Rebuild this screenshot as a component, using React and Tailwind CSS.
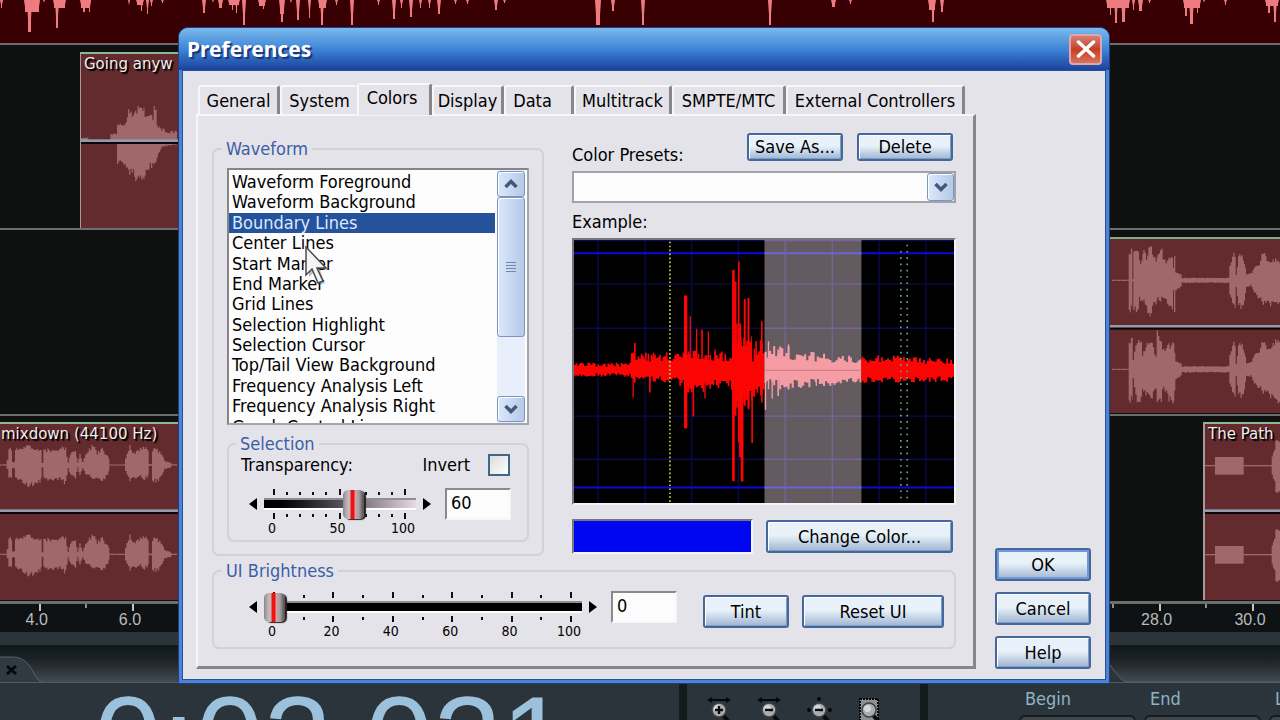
import React, { useState } from "react";

const rand = (i) => {
  const v = Math.abs(Math.sin(i * 12.9898 + 4.1) * 43758.5453);
  return v - Math.floor(v);
};

// Builds a jagged outline from [x, up, down] control points around a middle line.
function outline(points, mid, step = 4, rough = 0.25) {
  const top = [];
  const bottom = [];
  for (let k = 0; k < points.length - 1; k++) {
    const [x0, u0, d0] = points[k];
    const [x1, u1, d1] = points[k + 1];
    const n = Math.max(1, Math.round((x1 - x0) / step));
    for (let j = 0; j < n; j++) {
      const t = j / n;
      const x = x0 + (x1 - x0) * t;
      const xe = x0 + (x1 - x0) * ((j + 1) / n);
      const u = (u0 + (u1 - u0) * t) * (1 - rough * rand(x));
      const d = (d0 + (d1 - d0) * t) * (1 - rough * rand(x + 77));
      top.push(`${x},${mid - u}`, `${xe},${mid - u}`);
      bottom.push(`${x},${mid + d}`, `${xe},${mid + d}`);
    }
  }
  return [...top, ...bottom.reverse()].join(" ");
}

const MASTER_SPIKES = [
  [0, 3, 8], [24, 16, 12], [27, 5, 32], [43, 2, 4], [53, 13, 8], [55, 4, 28], [80, 11, 8], [82, 4, 12], [88, 3, 12],
  [128, 2, 9], [136, 8, 5], [140, 3, 11], [146, 3, 14], [150, 3, 6], [161, 3, 3], [202, 4, 13], [212, 2, 4], [218, 5, 8],
  [228, 12, 5], [231, 3, 10], [235, 3, 13], [242, 4, 25], [258, 8, 6], [262, 3, 9], [279, 6, 14], [280, 4, 22], [290, 2, 5],
  [296, 4, 20], [308, 3, 18], [318, 9, 8], [320, 4, 25], [335, 3, 5], [350, 4, 25], [377, 3, 5], [392, 4, 19], [400, 3, 8],
  [409, 4, 17], [419, 3, 8], [428, 3, 8], [437, 4, 14], [454, 3, 4], [466, 3, 4], [494, 4, 10], [503, 3, 3], [595, 6, 25],
  [611, 4, 11], [641, 4, 25], [768, 4, 25], [831, 5, 7], [849, 3, 4], [928, 8, 10], [931, 4, 22], [940, 4, 12],
  [1106, 24, 8], [1109, 3, 15], [1114, 4, 23], [1121, 5, 22], [1132, 3, 10], [1138, 5, 11], [1148, 3, 3], [1183, 18, 8],
  [1184, 4, 16], [1189, 5, 24], [1196, 3, 13], [1203, 2, 4], [1224, 3, 5], [1265, 14, 6], [1267, 4, 13], [1273, 4, 22],
];

const MIXDOWN = [
  [0, 2, 2], [18, 2, 2], [20, 15, 15], [25, 62, 45], [33, 55, 48], [36, 10, 10], [42, 10, 10], [45, 48, 45], [60, 62, 45],
  [70, 55, 60], [85, 62, 68], [100, 50, 65], [122, 55, 50], [125, 8, 8], [130, 50, 48], [150, 50, 52], [175, 50, 45],
  [185, 60, 52], [195, 54, 62], [203, 8, 10], [210, 40, 34], [225, 50, 44], [232, 8, 8], [238, 34, 38], [246, 12, 12],
  [255, 40, 28], [278, 64, 44], [290, 40, 44], [305, 52, 56], [325, 24, 24], [328, 2, 2], [370, 2, 2], [375, 22, 22],
  [388, 62, 52], [400, 40, 44], [415, 50, 36], [432, 64, 46], [443, 44, 38], [446, 3, 3], [455, 3, 3], [456, 50, 52],
  [470, 50, 54], [485, 38, 34], [492, 14, 14], [510, 8, 8], [514, 2, 2], [531, 2, 2],
];

const SPEECH_A = [
  [36, 2, 2], [85, 2, 2], [86, 97, 97], [96, 97, 97], [97, 4, 4], [100, 97, 98], [115, 95, 98], [117, 65, 65], [124, 65, 70],
  [130, 98, 75], [138, 80, 95], [145, 115, 130], [152, 110, 130], [156, 85, 90], [170, 70, 70], [172, 102, 65], [184, 95, 65],
  [188, 65, 60], [205, 70, 80], [215, 85, 100], [219, 40, 30], [222, 98, 108], [226, 30, 35], [240, 22, 22], [245, 8, 8],
  [385, 8, 8], [388, 45, 45], [396, 90, 85], [404, 90, 92], [407, 20, 20], [414, 85, 85], [425, 85, 88], [432, 65, 62],
  [438, 20, 20], [450, 22, 18], [465, 44, 44], [480, 64, 64], [488, 96, 84], [496, 74, 68], [510, 70, 80], [540, 70, 75],
];

const SPEECH_B = [
  [36, 2, 2], [85, 2, 2], [86, 97, 102], [96, 97, 102], [98, 30, 30], [106, 95, 98], [122, 102, 104], [126, 45, 70],
  [140, 82, 88], [155, 80, 98], [166, 45, 60], [170, 120, 120], [182, 100, 110], [186, 60, 60], [205, 80, 100], [220, 88, 104],
  [226, 30, 35], [240, 22, 22], [245, 10, 10], [385, 10, 10], [388, 45, 45], [396, 90, 85], [404, 90, 92], [407, 20, 20],
  [414, 85, 85], [425, 85, 88], [432, 65, 62], [438, 20, 20], [450, 22, 24], [465, 50, 50], [480, 70, 64], [488, 96, 84],
  [496, 74, 68], [510, 80, 90], [525, 95, 104], [540, 112, 115],
];

const GOING = [
  [242, 14, 2], [265, 14, 2], [266, 4, 2], [330, 4, 2], [332, 24, 2], [348, 26, 2], [352, 60, 68], [375, 60, 80], [385, 100, 100],
  [400, 88, 100], [410, 105, 130], [428, 118, 138], [438, 85, 90], [458, 80, 80], [462, 128, 90], [469, 120, 70], [471, 56, 50],
  [485, 42, 18], [500, 34, 14], [532, 32, 8],
];

function MasterWave() {
  return (
    <svg className="block h-full w-full" viewBox="0 0 1280 43" preserveAspectRatio="none" aria-hidden="true">
      {MASTER_SPIKES.map(([x, w, h], i) => (
        <polygon key={i} fill="#ee7b80" points={`${x},0 ${x + w},0 ${x + w - 1},${h * 0.6} ${x + w - 1},${h} ${x + 1},${h} ${x + 1},${h * 0.6}`} />
      ))}
    </svg>
  );
}

function Divider({ x, width, y }) {
  return (
    <>
      <rect x={x} y={y} width={width} height="8" fill="#939aab" />
      <rect x={x} y={y + 8} width={width} height="6" fill="#0c0608" />
    </>
  );
}

function ClipTitle({ children }) {
  return (
    <span className="absolute top-0 left-0 pl-[3px] whitespace-pre font-['DejaVu_Sans','Liberation_Sans',sans-serif] text-[15px] leading-5 text-[#f2ecec] [text-shadow:1px_1px_0_#000,2px_2px_1px_#000]">
      {children}
    </span>
  );
}

function Tracks() {
  return (
    <div className="shrink-0">
      <div className="h-[43px] bg-[#380003]">
        <MasterWave />
      </div>
      <div className="h-[187px] border-y-2 border-[#6c6e6e] bg-[#0e1110] pt-[7px]">
        <div className="relative ml-20 h-[176px] w-1/2 border-t-2 border-l border-t-[#8fb892] border-l-[#a59a98] bg-[#632b2e]">
          <svg className="block" width="98" height="174" viewBox="244 161 294 522" aria-hidden="true">
            <polygon fill="#a0686b" points={outline(GOING, 424)} />
            <Divider x={244} width={294} y={417} />
          </svg>
          <ClipTitle>Going anyw</ClipTitle>
        </div>
      </div>
      <div className="h-[186px] border-b-2 border-[#6c6e6e] bg-[#0e1110] pt-[7px]">
        <div className="ml-[50%] flex h-[176px] justify-end border-t-2 border-[#7fae86] bg-[#632b2e]">
          <svg className="block" width="170" height="174" viewBox="30 56 510 522" aria-hidden="true">
            <polygon fill="#a0686b" points={outline(SPEECH_A, 180)} />
            <polygon fill="#a0686b" points={outline(SPEECH_B, 447)} />
            <Divider x={30} width={510} y={314} />
          </svg>
        </div>
      </div>
      <div className="flex h-[187px] justify-between border-b-2 border-[#6c6e6e] bg-[#0e1110] pt-[6px]">
        <div className="relative h-[178px] w-1/2 border-t-2 border-[#8fb892] bg-[#632b2e]">
          <svg className="block" width="179" height="176" viewBox="0 72 537 528" aria-hidden="true">
            <polygon fill="#a0686b" points={outline(MIXDOWN, 195)} />
            <polygon fill="#a0686b" points={outline(MIXDOWN, 463)} />
            <Divider x={0} width={537} y={328} />
          </svg>
          <div className="absolute top-0 -left-0.5">
            <ClipTitle>mixdown (44100 Hz)</ClipTitle>
          </div>
        </div>
        <div className="relative h-[178px] w-[77px] overflow-hidden border-t-2 border-l-2 border-t-[#8fb892] border-l-[#a59a98] bg-[#632b2e]">
          <svg className="block" width="75" height="176" viewBox="315 611 225 528" aria-hidden="true">
            {[736, 1003].map((mid) => (
              <g key={mid} fill="#a0686b">
                <rect x="315" y={mid - 2} width="225" height="4" />
                <rect x="345" y={mid - 26} width="86" height="53" />
                <polygon points={outline([[515, 28, 28], [522, 50, 50], [526, 78, 84], [535, 78, 84], [540, 40, 40]], mid, 4, 0.1)} />
              </g>
            ))}
            <Divider x={315} width={225} y={867} />
          </svg>
          <ClipTitle>The Path</ClipTitle>
        </div>
      </div>
    </div>
  );
}

function Ruler() {
  const marks = Array.from({ length: 15 }, (_, i) => 4 + i * 2);
  const covered = (m) => m > 6 && m < 28;
  return (
    <div className="h-[29px] shrink-0 overflow-hidden border-t border-[#6c6e6e] bg-[#0e1214]">
      <div className="-ml-2 grid w-[1400px] grid-cols-[repeat(15,minmax(0,1fr))]">
        {marks.map((m) => (
          <div key={m} className="flex flex-col">
            <div className="grid grid-cols-2">
              <span className="h-1 border-l-2 border-[#8a8e90]" />
              <span className="h-[7px] border-l-2 border-[#c0c4c6]" />
            </div>
            {!covered(m) && m <= 30 && (
              <span className="pr-1 text-center font-['Liberation_Sans',Arial,sans-serif] text-[16px] leading-[18px] text-[#b8bcbe]">{m.toFixed(1)}</span>
            )}
          </div>
        ))}
      </div>
    </div>
  );
}

function Lens({ sign }) {
  return (
    <g>
      <path d="M15 19l7 8" stroke="#0a0c0d" strokeWidth="4" />
      <circle cx="12" cy="15" r="7" fill="#a9adaf" stroke="#3c4347" strokeWidth="1.5" />
      <circle cx="10.500" cy="13.500" r="3.500" fill="#d5d7d8" />
      {sign && <path d={sign === "plus" ? "M8 15h8M12 11v8" : "M8 15h8"} stroke="#0a0c0d" strokeWidth="2.500" />}
    </g>
  );
}

function ZoomButton({ label, children }) {
  return (
    <button type="button" aria-label={label} className="h-8 w-[26px] shrink-0">
      <svg width="26" height="32" viewBox="0 0 26 32" fill="none" aria-hidden="true">
        {children}
      </svg>
    </button>
  );
}

function TransportPanel() {
  const arrows = <path d="M0 5l5-3v2h14V2l5 3-5 3V6H5v2z" fill="#050708" />;
  return (
    <div className="flex min-h-9 flex-1 overflow-hidden bg-[#2c343b]">
      <div className="w-[679px] shrink-0 overflow-hidden pl-[94px]">
        <span className="-mt-1 block font-['Liberation_Sans',Arial,sans-serif] text-[122px] leading-[122px] text-[#9cc1dd]">0:02.021</span>
      </div>
      <div className="w-2 shrink-0 bg-[#141b1d]" />
      <div className="flex w-[233px] shrink-0 gap-6 pt-3 pl-5">
        <ZoomButton label="Zoom in horizontally">
          {arrows}
          <Lens sign="plus" />
        </ZoomButton>
        <ZoomButton label="Zoom out horizontally">
          {arrows}
          <Lens sign="minus" />
        </ZoomButton>
        <ZoomButton label="Zoom out full">
          <circle cx="12" cy="4" r="2" fill="#050708" />
          <circle cx="2" cy="15" r="2" fill="#050708" />
          <circle cx="23" cy="15" r="2" fill="#050708" />
          <Lens sign="minus" />
        </ZoomButton>
        <ZoomButton label="Zoom to selection">
          <rect x="3" y="4" width="18" height="26" fill="#8d9193" stroke="#050708" strokeWidth="2" strokeDasharray="2 1" />
          <Lens />
        </ZoomButton>
      </div>
      <div className="w-2 shrink-0 bg-[#141b1d]" />
      <div className="flex gap-2 pt-1.5 pl-[91px] font-['DejaVu_Sans_Condensed','DejaVu_Sans',sans-serif] text-[18px] leading-5 text-[#8fb3c6]">
        {["Begin", "End", "Length"].map((f) => (
          <label key={f} className="flex w-[117px] shrink-0 flex-col gap-1.5">
            <span className="pl-1.5">{f}</span>
            <input type="text" className="h-7 w-full rounded-md border-2 border-[#161c20] bg-[#3e464c]" />
          </label>
        ))}
      </div>
    </div>
  );
}

const FACE =
  "rounded-[3px] border-2 border-[#45689b] bg-linear-to-b from-[#e8f1fb] via-[#e9f2f9] via-45% to-[#9fb5d3] text-black text-center whitespace-nowrap";

function PushButton({ children, primary, className = "" }) {
  const edge = primary ? "shadow-[inset_0_0_0_2px_#6f97da]" : "shadow-[inset_1px_1px_0_#fff,inset_-1px_-1px_0_#7f9cc6]";
  return (
    <button type="button" className={`${FACE} ${edge} ${className}`}>
      {children}
    </button>
  );
}

function Ticks({ width, labels, bottom }) {
  const major = 10 / (labels.length - 1);
  const span = width - 21;
  return (
    <svg className="block" width={width} height="8" aria-hidden="true">
      {Array.from({ length: 11 }, (_, i) => {
        const big = i % major === 0;
        const x = Math.round(10 + (span * i) / 10) - 1;
        const h = big ? 6 : 3;
        return <rect key={i} x={x} y={bottom ? (big ? 1 : 2) : 7 - h} width="2" height={h} fill="#111" />;
      })}
    </svg>
  );
}

function Slider({ id, label, value, onChange, width, labels, dark }) {
  const track = dark
    ? "[&::-webkit-slider-runnable-track]:bg-black"
    : "[&::-webkit-slider-runnable-track]:bg-linear-to-r [&::-webkit-slider-runnable-track]:from-black [&::-webkit-slider-runnable-track]:via-[#55505a] [&::-webkit-slider-runnable-track]:to-[#ead9e6]";
  const step = (d) => onChange(Math.min(100, Math.max(0, value + d)));
  return (
    <div className="flex items-start gap-[7px]">
      <button type="button" aria-label={`Decrease ${label}`} onClick={() => step(-1)} className="mt-2.5">
        <svg className="block" width="8" height="12" aria-hidden="true"><path d="M8 0v12L0 6z" /></svg>
      </button>
      <div>
        <Ticks width={width} labels={labels} />
        <input
          id={id}
          type="range"
          min="0"
          max="100"
          value={value}
          aria-label={label}
          onChange={(e) => onChange(Number(e.target.value))}
          style={{ width }}
          className={`relative z-10 block h-4 appearance-none bg-transparent [&::-webkit-slider-runnable-track]:h-3 [&::-webkit-slider-runnable-track]:border-t-2 [&::-webkit-slider-runnable-track]:border-b-2 [&::-webkit-slider-runnable-track]:border-t-[#8e8d93] [&::-webkit-slider-runnable-track]:border-b-white ${track} [&::-webkit-slider-thumb]:-mt-2.5 [&::-webkit-slider-thumb]:h-[29px] [&::-webkit-slider-thumb]:w-[21px] [&::-webkit-slider-thumb]:appearance-none [&::-webkit-slider-thumb]:rounded-[5px] [&::-webkit-slider-thumb]:bg-[linear-gradient(90deg,#8b8588_0,#bdb4b8_4px,#c9b9bd_7px,#e81410_8px,#ff0a0a_11px,#c9a9ad_12px,#a59da1_16px,#5b5659_20px)] [&::-webkit-slider-thumb]:shadow-[2px_1px_1px_#222]`}
        />
        <Ticks width={width} labels={labels} bottom />
        <div className="flex justify-between pr-[13px] pl-2 text-[14px] leading-4">
          {labels.map((l) => (
            <span key={l} className="flex w-0 justify-center">{l}</span>
          ))}
        </div>
      </div>
      <button type="button" aria-label={`Increase ${label}`} onClick={() => step(1)} className="mt-2.5">
        <svg className="block" width="8" height="12" aria-hidden="true"><path d="M0 0v12l8-6z" /></svg>
      </button>
    </div>
  );
}

function NumberBox({ label, value, onChange }) {
  return (
    <input
      type="text"
      aria-label={label}
      value={value}
      onChange={(e) => onChange(Number(e.target.value) || 0)}
      className="h-8 w-[66px] border-2 border-t-[#8a898f] border-l-[#8a898f] border-r-[#f6f6f8] border-b-[#f6f6f8] bg-[#fcfcfd] pb-1 pl-1 leading-6"
    />
  );
}

const EX_MID = 423;
const EX_BODY = [
  [30, 24, 20], [195, 24, 20], [200, 56, 26], [350, 54, 50], [360, 66, 80], [390, 62, 84], [400, 60, 78], [440, 58, 64], [500, 60, 60],
  [503, 130, 90], [510, 160, 135], [530, 160, 145], [532, 100, 130], [545, 115, 120], [560, 110, 115], [563, 46, 90], [572, 95, 75],
  [600, 110, 112],
];
const EX_SELECTED = [[600, 66, 62], [620, 80, 56], [650, 80, 60], [700, 62, 55], [750, 54, 58], [800, 48, 46], [850, 54, 40], [890, 40, 38]];
const EX_TAIL = [[890, 46, 40], [990, 46, 38], [1080, 38, 38], [1167, 36, 36]];
const EX_SPIKES = [
  [212, 5, 340, 460], [207, 4, 400, 505], [245, 5, 370, 430], [268, 4, 370, 430], [257, 5, 420, 490], [364, 10, 197, 598],
  [378, 4, 260, 480], [387, 5, 420, 562], [397, 4, 298, 450], [413, 5, 300, 430], [432, 4, 306, 430], [422, 4, 420, 508],
  [452, 4, 360, 430], [507, 8, 120, 757], [513, 6, 155, 560], [523, 5, 95, 640], [527, 6, 295, 685], [533, 8, 400, 758], [541, 6, 208, 530],
  [552, 6, 205, 535], [563, 5, 420, 642], [575, 5, 335, 480], [592, 5, 275, 520],
];
const EX_SEL_SPIKES = [[603, 4, 423, 542], [612, 4, 335, 480], [623, 4, 400, 508], [641, 5, 360, 500], [672, 4, 345, 470], [755, 4, 400, 470]];
const EX_COLS = [102, 243, 382, 522, 662, 803, 943, 1083];
const EX_ROWS = [32, 163, 296, 561, 691];

function Spikes({ data, fill }) {
  return data.map(([x, w, t, b], i) => <rect key={i} x={x - w / 2} y={t} width={w} height={b - t} fill={fill} />);
}

function ExampleView() {
  return (
    <svg className="block h-full w-full bg-black" viewBox="30 30 1137 793" preserveAspectRatio="none" role="img" aria-label="Example waveform">
      <g stroke="#0a0a50" strokeWidth="4">
        {EX_COLS.map((x) => <line key={x} x1={x} x2={x} y1="30" y2="823" />)}
        {EX_ROWS.map((y) => <line key={y} x1="30" x2="1167" y1={y} y2={y} />)}
      </g>
      <g stroke="#0b0bd8" strokeWidth="6">
        <line x1="30" x2="1167" y1="70" y2="70" />
        <line x1="30" x2="1167" y1="776" y2="776" />
      </g>
      <polygon fill="#fb0505" points={outline(EX_BODY, EX_MID, 5, 0.55)} />
      <Spikes data={EX_SPIKES} fill="#fb0505" />
      <rect x="600" y="30" width="290" height="793" fill="#645b60" />
      <g stroke="#75649a" strokeWidth="4">
        {[662, 803].map((x) => <line key={x} x1={x} x2={x} y1="30" y2="823" />)}
        {EX_ROWS.map((y) => <line key={y} x1="600" x2="890" y1={y} y2={y} />)}
      </g>
      <g stroke="#6763d8" strokeWidth="6">
        <line x1="600" x2="890" y1="70" y2="70" />
        <line x1="600" x2="890" y1="776" y2="776" />
      </g>
      <polygon fill="#f59ca4" points={outline(EX_SELECTED, EX_MID, 6, 0.55)} />
      <Spikes data={EX_SEL_SPIKES} fill="#f59ca4" />
      <polygon fill="#fb0505" points={outline(EX_TAIL, EX_MID, 6, 0.5)} />
      <line x1="600" x2="890" y1="423" y2="423" stroke="#b06a72" strokeWidth="2" />
      <line x1="317" x2="317" y1="35" y2="823" stroke="#c9c94a" strokeWidth="5" strokeDasharray="5 7" />
      <line x1="1008" x2="1008" y1="63" y2="823" stroke="#7f9a8c" strokeWidth="5" strokeDasharray="5 14" />
      <line x1="1027" x2="1027" y1="44" y2="823" stroke="#7f9a8c" strokeWidth="5" strokeDasharray="5 14" />
    </svg>
  );
}

const ITEMS = [
  "Waveform Foreground", "Waveform Background", "Boundary Lines", "Center Lines", "Start Marker", "End Marker", "Grid Lines",
  "Selection Highlight", "Selection Cursor", "Top/Tail View Background", "Frequency Analysis Left", "Frequency Analysis Right",
  "Graph Control Lines",
];

function Chevron({ up }) {
  return (
    <svg className="mx-auto block" width="14" height="10" viewBox="0 0 14 10" fill="none" stroke="#44567a" strokeWidth="3.500" aria-hidden="true">
      <path d={up ? "M1.500 8L7 2.500 12.500 8" : "M1.500 2L7 7.500 12.500 2"} />
    </svg>
  );
}

const SCROLL = "rounded-[3px] border border-[#7c95bd] bg-linear-to-r from-[#dbe8fb] to-[#b4c9e8] shadow-[inset_1px_1px_0_#fff]";

function ItemList() {
  const [selected, setSelected] = useState(2);
  return (
    <div className="flex h-[257px] justify-between border-2 border-t-[#85848b] border-l-[#85848b] border-r-[#a5a5ad] border-b-[#a5a5ad] bg-[#fdfdfe] pr-0.5">
      <div className="w-[266px] overflow-hidden pt-0.5">
        <ul role="listbox" aria-label="Waveform colors" className="grid h-[265px] auto-rows-fr">
          {ITEMS.map((item, i) => (
            <li
              key={item}
              role="option"
              aria-selected={i === selected}
              onClick={() => setSelected(i)}
              className={`pl-[3px] leading-5 ${i === selected ? "bg-[#24529b] text-[#dce8ff]" : ""}`}
            >
              {item}
            </li>
          ))}
        </ul>
      </div>
      <div className="flex w-7 flex-col bg-[#e9eefb] py-px">
        <button type="button" aria-label="Scroll up" className={`h-[26px] ${SCROLL}`}>
          <Chevron up />
        </button>
        <div className={`flex h-[140px] flex-col items-center justify-center gap-0.5 ${SCROLL}`}>
          {[0, 1, 2, 3].map((i) => (
            <span key={i} className="h-px w-2.5 bg-[#6f87b0]" />
          ))}
        </div>
        <button type="button" aria-label="Scroll down" className={`mt-auto h-[26px] ${SCROLL}`}>
          <Chevron />
        </button>
      </div>
    </div>
  );
}

const GROUP = "rounded-[7px] border-2 border-[#d2d1d4]";
const LEGEND = "px-1 leading-5 text-[#3c5fa6]";

const TABS = [
  ["General", "w-[82px]"], ["System", "w-[77px]"], ["Colors", "w-[75px]"], ["Display", "w-[72px]"], ["Data", "w-[70px]"],
  ["Multitrack", "w-[98px]"], ["SMPTE/MTC", "w-[114px]"], ["External Controllers", "w-[179px]"],
];

function TabRow() {
  return (
    <div role="tablist" className="relative z-10 flex h-8 items-end pl-0.5">
      {TABS.map(([name, width]) => {
        const active = name === "Colors";
        const before = name === "System";
        return (
          <button
            key={name}
            type="button"
            role="tab"
            aria-selected={active}
            className={`${width} shrink-0 rounded-t-[3px] border-t-2 border-l-2 border-t-[#f7f7fa] border-l-[#f7f7fa] whitespace-nowrap ${
              active
                ? "h-8 border-r-[3px] border-r-[#87868d] bg-[#e4e3ea] pr-1 pb-1"
                : before
                  ? "mb-px h-[29px]"
                  : "mb-px h-[29px] border-r-[3px] border-r-[#87868d]"
            } ${name === "Data" ? "pr-3" : ""}`}
          >
            {name}
          </button>
        );
      })}
    </div>
  );
}

function ColorsPage() {
  const [transparency, setTransparency] = useState(60);
  const [brightness, setBrightness] = useState(0);
  return (
    <div role="tabpanel" className="-mt-px border-t-2 border-r-[3px] border-b-[3px] border-l-2 border-t-[#f7f7fa] border-r-[#87868d] border-b-[#87868d] border-l-[#f7f7fa] pt-[17px] pr-[17px] pb-[17px] pl-[14px]">
      <div className="flex items-start gap-7">
        <fieldset className={`mt-1.5 w-[332px] shrink-0 px-[13px] pt-[9px] pb-3 ${GROUP}`}>
          <legend className={`ml-[-5px] ${LEGEND}`}>Waveform</legend>
          <ItemList />
          <fieldset className={`mt-[9px] pr-[14px] pb-1 pl-3 ${GROUP}`}>
            <legend className={`ml-[-5px] ${LEGEND}`}>Selection</legend>
            <div className="flex items-center justify-between pr-[3px] leading-5">
              <label htmlFor="transparency">Transparency:</label>
              <label className="flex items-center gap-[18px]">
                Invert
                <input type="checkbox" className="h-[22px] w-[22px] appearance-none border-2 border-[#3f668c] bg-linear-to-br from-[#dcdcd8] to-white" />
              </label>
            </div>
            <div className="mt-3 flex items-start gap-[14px] pl-2">
              <Slider id="transparency" label="Transparency" value={transparency} onChange={setTransparency} width={152} labels={["0", "50", "100"]} />
              <NumberBox label="Transparency value" value={transparency} onChange={setTransparency} />
            </div>
          </fieldset>
        </fieldset>
        <div className="min-w-0 flex-1">
          <div className="flex h-8 items-start gap-[14px] pr-[3px]">
            <label htmlFor="preset" className="mr-auto self-end leading-5">Color Presets:</label>
            <PushButton className="h-7 w-24 leading-5">Save As...</PushButton>
            <PushButton className="h-7 w-24 leading-5">Delete</PushButton>
          </div>
          <div className="relative mt-1.5">
            <select id="preset" defaultValue="" className="block h-8 w-full appearance-none border-2 border-[#a3a2ab] bg-[#fcfcfd] pl-2">
              <option value=""></option>
            </select>
            <span className={`pointer-events-none absolute top-0.5 right-0.5 flex h-7 w-[27px] items-center ${SCROLL}`}>
              <Chevron />
            </span>
          </div>
          <p className="mt-[9px] leading-5">Example:</p>
          <div className="mt-1.5 h-[267px] border-2 border-t-[#77767e] border-l-[#77767e] border-r-[#f4f4f6] border-b-[#f4f4f6]">
            <ExampleView />
          </div>
          <div className="mt-[14px] flex items-center justify-between pr-[3px]">
            <div className="h-[35px] w-[181px] border-2 border-t-[#77767e] border-l-[#77767e] border-r-[#f4f4f6] border-b-[#f4f4f6] bg-[#0006f0]" />
            <PushButton className="h-[33px] w-[187px]">Change Color...</PushButton>
          </div>
        </div>
      </div>
      <fieldset className={`mt-[5px] flex items-start pt-2.5 pb-2 pl-[35px] ${GROUP}`}>
        <legend className={`ml-[-27px] ${LEGEND}`}>UI Brightness</legend>
        <Slider id="brightness" label="Brightness" value={brightness} onChange={setBrightness} width={318} labels={["0", "20", "40", "60", "80", "100"]} dark />
        <div className="ml-[14px]">
          <NumberBox label="Brightness value" value={brightness} onChange={setBrightness} />
        </div>
        <PushButton className="mt-1 ml-[26px] h-[33px] w-[86px]">Tint</PushButton>
        <PushButton className="mt-1 ml-[13px] h-[33px] w-[142px]">Reset UI</PushButton>
      </fieldset>
    </div>
  );
}

function PreferencesWindow() {
  return (
    <div
      role="dialog"
      aria-label="Preferences"
      className="absolute top-[27px] left-[178px] rounded-t-[10px] border border-[#1c3f8a] bg-[#4f83d2] px-[3px] pb-[3px] font-['DejaVu_Sans_Condensed','DejaVu_Sans',sans-serif] text-[18px] leading-6 text-black"
    >
      <div className="-mx-[3px] flex h-[42px] items-center justify-between rounded-t-[9px] bg-linear-to-b from-[#7ab9ea] via-[#3f85d8] via-50% to-[#1b429c] pr-[7px] pl-2">
        <h1 className="font-['Noto_Sans','Open_Sans',sans-serif] text-[21px] font-bold text-white [text-shadow:2px_2px_1px_#16347e]">Preferences</h1>
        <button type="button" aria-label="Close" className="flex h-[31px] w-[33px] items-center justify-center rounded-[4px] border-2 border-[#dfa7ab] bg-linear-to-b from-[#cf8078] via-[#c93c1c] via-50% to-[#d4735c]">
          <svg width="20" height="18" viewBox="0 0 20 18" stroke="#fff" strokeWidth="3.500" strokeLinecap="round" aria-hidden="true">
            <path d="M2.500 2l15 14M17.500 2l-15 14" />
          </svg>
        </button>
      </div>
      <div className="flex border border-[#24529b] bg-[#e4e3ea] pt-3 pr-[14px] pb-2.5 pl-[13px]">
        <div className="w-[780px]">
          <TabRow />
          <ColorsPage />
        </div>
        <div className="ml-[19px] flex w-24 flex-col justify-end gap-[11px]">
          <PushButton primary className="h-[33px]">OK</PushButton>
          <PushButton className="h-[33px]">Cancel</PushButton>
          <PushButton className="h-[33px]">Help</PushButton>
        </div>
      </div>
    </div>
  );
}

function PanelTabs() {
  return (
    <div className="flex h-[38px] shrink-0 items-end justify-between border-b border-[#555c61] bg-linear-to-b from-[#11181a] via-[#1c2327] via-40% to-[#444b52]">
      <svg width="42" height="26" viewBox="0 0 42 26" fill="none" aria-hidden="true">
        <path d="M0 1h12c8 0 14 3 19 11 4 7 6 13 11 14H0z" fill="#323a41" />
        <path d="M0 1h12c8 0 14 3 19 11 4 7 6 13 11 14" stroke="#5b6267" />
        <path d="M7 10l9 8M16 10l-9 8" stroke="#050708" strokeWidth="3" />
      </svg>
      <svg width="180" height="26" viewBox="0 0 180 26" fill="none" aria-hidden="true">
        <path d="M0 0c10 4 16 22 26 26H0z" fill="#2c343b" />
        <path d="M0 0c10 4 16 22 26 26h154" stroke="#5b6267" />
      </svg>
    </div>
  );
}

export default function App() {
  return (
    <main className="relative flex h-screen flex-col overflow-hidden bg-[#0e1110]">
      <Tracks />
      <Ruler />
      <div className="h-[13px] shrink-0 bg-[#2b343b]" />
      <PanelTabs />
      <TransportPanel />
      <PreferencesWindow />
      <svg className="pointer-events-none absolute top-[245px] left-[304px]" width="28" height="44" viewBox="0 0 28 44" aria-hidden="true">
        <path d="M5 5v27l6-6 5 14 5-2-5-13h9z" fill="#000" opacity="0.250" />
        <path d="M2 2v28l6-6 6 14 5-2-6-13h9z" fill="#f4f4f4" stroke="#4a4a4a" strokeWidth="1.500" />
      </svg>
    </main>
  );
}
